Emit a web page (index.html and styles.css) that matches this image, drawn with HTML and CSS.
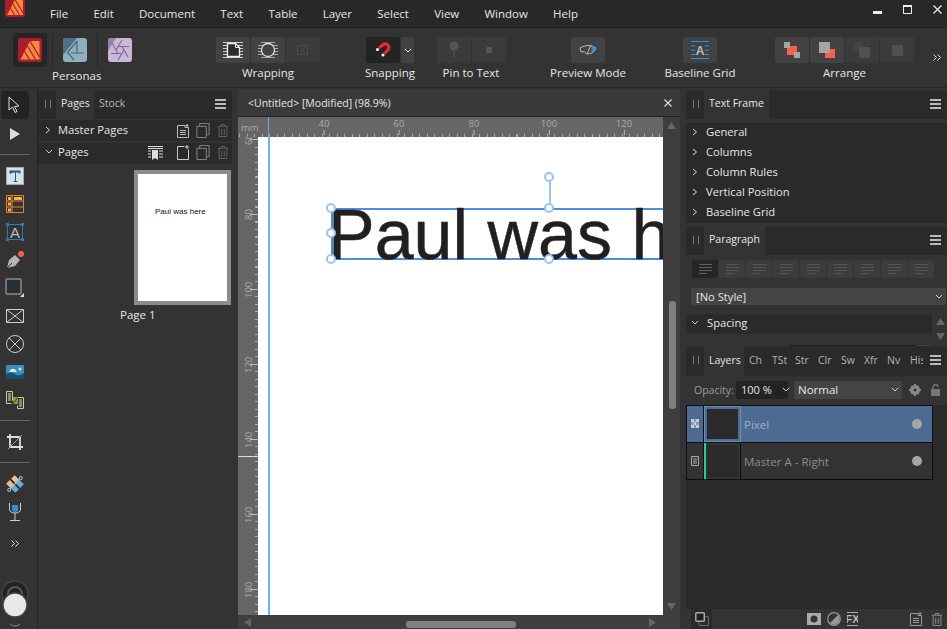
FILE: index.html
```html
<!DOCTYPE html>
<html lang="en">

<head>
    <meta charset="UTF-8">
    <title>Affinity Publisher</title>

    <link rel="stylesheet" href="styles.css">
</head>

<body>
    <svg class="defs" width="0" height="0">
        <symbol id="publisher" viewBox="0 0 24 24">
            <rect width="24" height="24" rx="3" fill="#a81f2c" />
            <path d="M2.500 21.500 12 3h9.500v18.500z" fill="#f8893f" />
            <path d="M12 3 21.500 19M9.500 8 17.500 21.500M6.500 13.500 11.500 21.500" stroke="#a81f2c" stroke-width="1.300" fill="none" />
        </symbol>
        <symbol id="bin" viewBox="0 0 14 16">
            <path d="M1 3h12M5 3V1h4v2M2.500 3v12h9V3M5.500 6v7M8.500 6v7" fill="none" stroke="currentColor" />
        </symbol>
        <symbol id="copy" viewBox="0 0 14 16">
            <path d="M3.500 3.500v-3h10v12h-3M.5 3.500h10v12H.5z" fill="none" stroke="currentColor" />
        </symbol>
        <symbol id="burger" viewBox="0 0 11 10">
            <path d="M0 0h11v2H0zM0 4h11v2H0zM0 8h11v2H0z" fill="currentColor" />
        </symbol>
        <symbol id="align" viewBox="0 0 13 13">
            <path d="M0 1.500h13M0 4.500h13M0 7.500h13M0 10.500h8" stroke="currentColor" fill="none" />
        </symbol>
    </svg>

    <header class="menubar">
        <svg class="logo" width="20" height="20"><use href="#publisher" y="-3" width="20" height="20" /></svg>
        <nav class="menu">
            <span>File</span>
            <span>Edit</span>
            <span>Document</span>
            <span>Text</span>
            <span>Table</span>
            <span>Layer</span>
            <span>Select</span>
            <span>View</span>
            <span>Window</span>
            <span>Help</span>
        </nav>
        <div class="winbtns">
            <svg width="10" height="10"><path d="M0 6h9v3H0z" fill="#eee" /></svg>
            <svg width="10" height="10"><path d="M.5 1.500h8v7h-8z" fill="none" stroke="#eee" /><path d="M0 0h9v2H0z" fill="#eee" /></svg>
            <svg width="10" height="10"><path d="M.5.500l8 8M8.500.500l-8 8" stroke="#eee" stroke-width="1.200" /></svg>
        </div>
    </header>

    <section class="toolbar">
        <div class="group personas">
            <div class="persona-row">
                <span class="persona active"><svg width="24" height="24"><use href="#publisher" /></svg></span>
                <span class="sep first"></span>
                <span class="persona">
                    <svg width="24" height="24">
                        <rect width="24" height="24" rx="3" fill="#8fb0bd" />
                        <path d="M3 0h11L0 17V3q0-3 3-3z" fill="#50708a" />
                        <path d="M14 3 4.500 14.500 11 22M14 3v12M8 15h13" fill="none" stroke="#48667a" stroke-width="1.200" />
                    </svg>
                </span>
                <span class="sep"></span>
                <span class="persona">
                    <svg width="24" height="24">
                        <rect width="24" height="24" rx="3" fill="#cbb7d8" />
                        <path d="M3 0h5L0 13V3q0-3 3-3z" fill="#97839f" />
                        <path d="M14 8.500 20 19M16 12 10 22M14 15.500H3M10 15.500 4 5M8 12 14 2M10 8.500H21" fill="none" stroke="#7f6a8e" stroke-width="1.100" />
                    </svg>
                </span>
            </div>
            <span class="label">Personas</span>
        </div>

        <div class="group wrapping">
            <div class="btns">
                <span class="btn">
                    <svg width="20" height="18" fill="none" stroke="#ccc">
                        <path d="M0 1.500h20M0 4.500h20M0 7.500h20M0 10.500h20M0 13.500h20M0 16.500h20" />
                        <path d="M4.500 2.500h8l4 4v9h-12z" fill="#2c2c2c" stroke="#eee" stroke-width="1.300" />
                        <path d="M12.500 2.500v4h4" stroke="#eee" />
                    </svg>
                </span>
                <span class="btn">
                    <svg width="20" height="18" fill="none" stroke="#ddd">
                        <path d="M3 1.500h14M0 4.500h20M0 7.500h20M0 10.500h20M0 13.500h20M3 16.500h14" stroke="#aaa" />
                        <circle cx="10" cy="9" r="6.500" fill="#424242" stroke-width="1.300" />
                    </svg>
                </span>
                <span class="btn off">
                    <svg width="14" height="12" fill="none" stroke="#4e4e4e">
                        <path d="M1.500 1.500h10v9h-10zM4.500 4l4 4.500M8.500 4l-4 4.500" />
                    </svg>
                </span>
            </div>
            <span class="label">Wrapping</span>
        </div>

        <div class="group snapping">
            <div class="btns">
                <span class="btn dark">
                    <svg width="16" height="16" fill="none">
                        <path d="M4 6 8 2.800A3.400 3.400 0 0 1 12.800 8L9.500 11.500" stroke="#e8263a" stroke-width="3.200" />
                        <circle cx="2.500" cy="7.500" r="1.600" fill="#eee" />
                        <circle cx="8" cy="13" r="1.600" fill="#eee" />
                    </svg>
                </span>
                <span class="btn drop">
                    <svg width="8" height="5" fill="none" stroke="#ddd"><path d="M.8.800 4 4 7.200.800" /></svg>
                </span>
            </div>
            <span class="label">Snapping</span>
        </div>

        <div class="group pin">
            <div class="btns">
                <span class="btn off">
                    <svg width="12" height="20"><circle cx="6" cy="6" r="4.500" fill="#555" /><path d="M5.500 9h1v9h-1z" fill="#555" /></svg>
                </span>
                <span class="btn off">
                    <svg width="6" height="6"><path d="M0 0h6v6H0z" fill="#555" /></svg>
                </span>
            </div>
            <span class="label">Pin to Text</span>
        </div>

        <div class="group preview">
            <div class="btns">
                <span class="btn">
                    <svg width="18" height="12" fill="none" stroke="#bbb">
                        <path d="M1 4q8-5 16 0-2 6-9 6-2-1-3-2.500L2 8z" />
                        <path d="M12 1 8 10" />
                        <path d="M13 2q3 1 4 2-2 4-5 5z" fill="#2a8fdc" stroke="none" />
                    </svg>
                </span>
            </div>
            <span class="label">Preview Mode</span>
        </div>

        <div class="group baseline">
            <div class="btns">
                <span class="btn">
                    <svg width="18" height="18">
                        <path d="M0 .5h18M0 4.800h18M0 9.200h18M0 13.500h18M0 17.500h18" stroke="#2a93df" fill="none" />
                        <rect x="4.500" y="3" width="9" height="12" fill="#424242" />
                        <text x="9" y="13.500" class="glyph">A</text>
                    </svg>
                </span>
            </div>
            <span class="label">Baseline Grid</span>
        </div>

        <div class="group arrange">
            <div class="btns">
                <span class="btn">
                    <svg width="16" height="16">
                        <path d="M0 0h6v6H0zM10 10h6v6h-6z" fill="#a5a5a5" />
                        <path d="M3 6h3V4h7v6h-3v3H3z" fill="#f2604f" />
                    </svg>
                </span>
                <span class="btn">
                    <svg width="16" height="16">
                        <path d="M6 7h10v9H6z" fill="#f2604f" />
                        <path d="M0 0h11v11H0z" fill="#a5a5a5" />
                    </svg>
                </span>
                <span class="btn off">
                    <svg width="16" height="16"><path d="M0 0h9v9H0z" fill="#444" /><path d="M5 5h11v11H5z" fill="#505050" /></svg>
                </span>
                <span class="btn off">
                    <svg width="16" height="16"><path d="M3 3h11v11H3z" fill="#505050" /></svg>
                </span>
            </div>
            <span class="label">Arrange</span>
        </div>

        <svg class="more" width="8" height="7" fill="none" stroke="#ddd"><path d="M.5.500 3.500 3.500.5 6.500M4.500.500 7.500 3.500 4.500 6.500" /></svg>
    </section>

    <main class="workspace">
        <aside class="tools">
            <span class="tool active">
                <svg width="14" height="18"><path d="M1 1v13l3.500-3 2.500 5.500 2-1-2.500-5 4.500-.5z" fill="none" stroke="#ddd" /></svg>
            </span>
            <span class="tool node">
                <svg width="10" height="12"><path d="M0 0l10 6-10 6z" fill="#ddd" /></svg>
            </span>
            <hr>
            <span class="tool">
                <svg width="18" height="18"><rect x=".5" y=".5" width="17" height="17" fill="#d8e3e8" stroke="#aaa" /><path d="M3.500 3.500h11v3h-1.500l-.5-1h-2.500v8.500h1.500v1H7.500v-1H9V5.500H6.500l-.5 1H3.500z" fill="#1f5e7b" /></svg>
            </span>
            <span class="tool">
                <svg width="18" height="18" fill="none"><path d="M.5.500h17v17H.5zM.5 6h17M.5 12h17M6 .5v17" stroke="#e8812f" /><path d="M2 2h3v3H2zM2 7.500h3v3H2zM2 13.500h3v3H2zM8 2h8v3H8z" fill="#f0b83c" /></svg>
            </span>
            <span class="tool">
                <svg width="18" height="18" fill="none"><path d="M1.500 1.500h15v15h-15z" stroke="#2a7bb0" /><path d="M0 0h3v3H0zM15 0h3v3h-3zM0 15h3v3H0zM15 15h3v3h-3z" fill="#2a7bb0" /><text x="9" y="14.500" class="glyph big">A</text></svg>
            </span>
            <span class="tool">
                <svg width="18" height="18"><path d="M1 17 3 9l6-5 5 5-5 6z" fill="#b5b5b5" /><path d="M1 17l5-5" stroke="#333" /><circle cx="15" cy="3" r="3" fill="#f2604f" /></svg>
            </span>
            <span class="tool">
                <svg width="20" height="20"><rect x="1" y="1" width="15" height="15" rx="1" fill="#263036" stroke="#8a8a8a" stroke-width="1.500" /><path d="M19 15v4h-4z" fill="#ddd" /></svg>
            </span>
            <span class="tool">
                <svg width="18" height="14" fill="none" stroke="#ccc"><path d="M.5.500h17v13H.5zM.5.500l17 13M17.500.500l-17 13" /></svg>
            </span>
            <span class="tool">
                <svg width="18" height="18" fill="none" stroke="#ccc"><circle cx="9" cy="9" r="8.500" /><path d="M3 3l12 12M15 3 3 15" /></svg>
            </span>
            <span class="tool">
                <svg width="18" height="14"><rect width="18" height="14" rx="1" fill="#3a8dbd" /><path d="M0 9q5-3 9 0t9-1v5q0 1-1 1H1q-1 0-1-1z" fill="#17506f" /><path d="M3 7q2-4 4-3 2-1 4 3z" fill="#d6e6ee" /><circle cx="14" cy="4" r="1.500" fill="#d6e6ee" /></svg>
            </span>
            <span class="tool">
                <svg width="18" height="18" fill="none"><path d="M6.500 9.500V.5H.5v12h5M12 6.500h5.500v11h-6v-3" stroke="#c9d19a" /><path d="M7 6h5L7 12zM12 7v6H7z" fill="#84a021" /><path d="M2 3h3M2 5h3M2 7h3M2 9h3M13 9h3M13 11h3M13 13h3M13 15h3" stroke="#ddd" /></svg>
            </span>
            <hr>
            <span class="tool">
                <svg width="16" height="16" fill="none" stroke="#ddd" stroke-width="1.800"><path d="M3 0v13h13M0 3h13v13" /><path d="M1 15 15 1" stroke="#999" stroke-width="1" /></svg>
            </span>
            <hr>
            <span class="tool">
                <svg width="20" height="20">
                    <g transform="rotate(-45 10 10)">
                        <path d="M4 3.500h5V10H4zM11 3.500h5V10h-5z" fill="#e9c08e" />
                        <path d="M4 10h5v6.500H4zM11 10h5v6.500h-5z" fill="#5fb1e0" />
                        <path d="M2 10h16" stroke="#bbb" />
                        <circle cx="1.800" cy="10" r="1.500" fill="#333" stroke="#bbb" />
                        <circle cx="18.200" cy="10" r="1.500" fill="#333" stroke="#bbb" />
                    </g>
                </svg>
            </span>
            <span class="tool">
                <svg width="12" height="18" fill="none"><path d="M3 2h6v6q-3 2-6 0z" fill="#3b8cc4" /><path d="M.5 0v6q0 4 5.500 4t5.500-4V0M6 10v7M1 17.500h10" stroke="#ccc" /></svg>
            </span>
            <span class="tool tall">
                <svg width="8" height="7" fill="none" stroke="#ddd"><path d="M.5.500 3.500 3.500.5 6.500M4.500.500 7.500 3.500 4.500 6.500" /></svg>
            </span>
            <div class="swatches">
                <svg width="28" height="49" fill="none">
                    <circle cx="14" cy="14" r="13" fill="#222" stroke="#444" stroke-width="1.500" />
                    <circle cx="14" cy="14" r="7" stroke="#555" stroke-width="2" />
                    <circle cx="14" cy="25" r="12" fill="#e8e8e8" stroke="#444" stroke-width="1.500" />
                    <path d="M9 44q5 4 10 0" stroke="#888" />
                </svg>
            </div>
        </aside>

        <aside class="pages-panel">
            <div class="tabbar">
                <span class="grip"></span>
                <span class="tab on">Pages</span>
                <span class="tab dim">Stock</span>
                <svg class="burger" width="11" height="10"><use href="#burger" /></svg>
            </div>
            <div class="sec master-row">
                <svg class="chev" width="6" height="8" fill="none" stroke="#ddd"><path d="M1 1l3.500 3L1 7" /></svg>
                <span class="sec-title">Master Pages</span>
                <span class="sec-icons">
                    <svg width="12" height="14" fill="none" stroke="#bbb"><path d="M.5 1.500h7.500v2h3.500v10H.5zM3 6.500h6M3 8.500h6M3 10.500h6M10 0v3M8.500 1.500h3" /></svg>
                    <svg class="faint" width="14" height="15"><use href="#copy" /></svg>
                    <svg class="fainter" width="12" height="15"><use href="#bin" /></svg>
                </span>
            </div>
            <div class="sec">
                <svg class="chev" width="8" height="6" fill="none" stroke="#ccc"><path d="M1 1l3 3 3-3" /></svg>
                <span class="sec-title">Pages</span>
                <span class="sec-icons">
                    <svg class="ribbon" width="15" height="14" fill="none" stroke="#ddd"><path d="M0 .5h15M0 2.500h15M0 5h3M11 5h4M0 8h3M11 8h4M0 11h3M11 11h4" /><path d="M4 4h6v10l-3-2-3 2z" fill="#ddd" stroke="none" /></svg>
                    <svg width="12" height="15" fill="none" stroke="#ccc"><path d="M.5 1.500h7M.5 1.500v13h11v-10M10 0v4M8 2h4" /></svg>
                    <svg class="faint" width="14" height="15"><use href="#copy" /></svg>
                    <svg class="fainter" width="12" height="15"><use href="#bin" /></svg>
                </span>
            </div>
            <div class="thumbs">
                <div class="thumb"><p>Paul was here</p></div>
                <span class="thumb-name">Page 1</span>
            </div>
        </aside>

        <section class="doc">
            <div class="doc-tab">
                <span>&lt;Untitled&gt; [Modified] (98.9%)</span>
                <svg width="8" height="8" fill="none" stroke="#ddd" stroke-width="1.200"><path d="M.5.500l7 7M7.500.500l-7 7" /></svg>
            </div>
            <div class="doc-body">
                <div class="viewport">
                    <div class="ruler-top">
                        <span class="mm">mm</span>
                        <i class="tick-x" style="left:86px">40</i>
                        <i class="tick-x" style="left:161px">60</i>
                        <i class="tick-x" style="left:236px">80</i>
                        <i class="tick-x" style="left:311px">100</i>
                        <i class="tick-x" style="left:386px">120</i>
                    </div>
                    <div class="view-row">
                        <div class="ruler-left">
                            <i class="tick-y" style="top:2px">60</i>
                            <i class="tick-y" style="top:77px">80</i>
                            <i class="tick-y" style="top:152px">100</i>
                            <i class="tick-y" style="top:227px">120</i>
                            <i class="tick-y" style="top:302px">140</i>
                            <i class="tick-y" style="top:377px">160</i>
                            <i class="tick-y" style="top:452px">180</i>
                            <b class="cursor-mark"></b>
                        </div>
                        <div class="page">
                            <b class="guide"></b>
                            <div class="frame">Paul was here</div>
                            <b class="rot-line"></b>
                            <b class="handle" style="left:73px;top:71px"></b>
                            <b class="handle" style="left:291px;top:71px"></b>
                            <b class="handle" style="left:73px;top:96px"></b>
                            <b class="handle" style="left:73px;top:122px"></b>
                            <b class="handle" style="left:291px;top:122px"></b>
                            <b class="handle" style="left:291px;top:40px"></b>
                        </div>
                    </div>
                </div>
                <div class="vscroll">
                    <svg width="9" height="7"><path d="M4.500 0 9 7H0z" fill="#666" /></svg>
                    <span class="vthumb"></span>
                    <svg width="9" height="7"><path d="M4.500 7 9 0H0z" fill="#666" /></svg>
                </div>
            </div>
            <div class="hscroll">
                <svg width="7" height="9"><path d="M7 4.500 0 9V0z" fill="#666" transform="rotate(180 3.500 4.500)" /></svg>
                <span class="hthumb"></span>
                <svg width="7" height="9"><path d="M7 4.500 0 9V0z" fill="#666" /></svg>
            </div>
        </section>

        <aside class="right-panel">
            <div class="tabbar">
                <span class="grip"></span>
                <span class="tab on">Text Frame</span>
                <svg class="burger" width="11" height="10"><use href="#burger" /></svg>
            </div>
            <ul class="frame-list">
                <li><svg width="6" height="8" fill="none" stroke="#ddd"><path d="M1 1l3.500 3L1 7" /></svg>General</li>
                <li><svg width="6" height="8" fill="none" stroke="#ddd"><path d="M1 1l3.500 3L1 7" /></svg>Columns</li>
                <li><svg width="6" height="8" fill="none" stroke="#ddd"><path d="M1 1l3.500 3L1 7" /></svg>Column Rules</li>
                <li><svg width="6" height="8" fill="none" stroke="#ddd"><path d="M1 1l3.500 3L1 7" /></svg>Vertical Position</li>
                <li><svg width="6" height="8" fill="none" stroke="#ddd"><path d="M1 1l3.500 3L1 7" /></svg>Baseline Grid</li>
            </ul>
            <div class="tabbar second">
                <span class="grip"></span>
                <span class="tab on">Paragraph</span>
                <svg class="burger" width="11" height="10"><use href="#burger" /></svg>
            </div>
            <div class="para">
                <div class="align-row">
                    <span class="al active"><svg width="13" height="13"><use href="#align" /></svg></span>
                    <span class="al"><svg width="13" height="13"><use href="#align" /></svg></span>
                    <span class="al"><svg width="13" height="13"><use href="#align" /></svg></span>
                    <span class="al"><svg width="13" height="13"><use href="#align" /></svg></span>
                    <span class="al"><svg width="13" height="13"><use href="#align" /></svg></span>
                    <span class="al"><svg width="13" height="13"><use href="#align" /></svg></span>
                    <span class="al"><svg width="13" height="13"><use href="#align" /></svg></span>
                    <span class="al"><svg width="13" height="13"><use href="#align" /></svg></span>
                    <span class="al"><svg width="13" height="13"><use href="#align" /></svg></span>
                </div>
                <div class="style-select">
                    <span>[No Style]</span>
                    <svg width="8" height="5" fill="none" stroke="#ccc"><path d="M.8.800 4 4 7.200.800" /></svg>
                </div>
                <div class="spacing-row">
                    <div class="spacing">
                        <svg width="8" height="6" fill="none" stroke="#ccc"><path d="M1 1l3 3 3-3" /></svg>
                        Spacing
                    </div>
                    <div class="spacing-arrows">
                        <svg width="9" height="7"><path d="M4.500 0 9 7H0z" fill="#666" /></svg>
                        <svg width="9" height="7"><path d="M4.500 7 9 0H0z" fill="#666" /></svg>
                    </div>
                </div>
                <div class="spacing-stub"><span class="stub-dark"></span><span class="stub-thumb"></span></div>
            </div>
            <div class="tabbar third">
                <span class="grip"></span>
                <span class="tab on">Layers</span>
                <span class="tab dim small">Ch</span>
                <span class="tab dim small">TSt</span>
                <span class="tab dim small">Str</span>
                <span class="tab dim small">Clr</span>
                <span class="tab dim small">Sw</span>
                <span class="tab dim small">Xfr</span>
                <span class="tab dim small">Nv</span>
                <span class="tab dim small last">His</span>
                <svg class="burger" width="11" height="10"><use href="#burger" /></svg>
            </div>
            <div class="opacity-row">
                <span class="op-label">Opacity:</span>
                <span class="op-value">100 %<svg width="8" height="5" fill="none" stroke="#ccc"><path d="M.8.800 4 4 7.200.800" /></svg></span>
                <span class="blend">Normal<svg width="8" height="5" fill="none" stroke="#ccc"><path d="M.8.800 4 4 7.200.800" /></svg></span>
                <svg width="12" height="12"><circle cx="6" cy="6" r="3.500" fill="none" stroke="#888" stroke-width="3" /><path d="M5 0h2v12H5zM0 5h12v2H0zM1.500 2.900l1.400-1.400 7.600 7.600-1.400 1.400zM9.100 1.500l1.400 1.400-7.600 7.600-1.400-1.400z" fill="#888" /><circle cx="6" cy="6" r="1.500" fill="#333" /></svg>
                <svg width="9" height="12"><path d="M0 5h9v7H0z" fill="#777" /><path d="M2 5V3a2.500 2.500 0 0 1 5 0" fill="none" stroke="#777" stroke-width="1.300" /></svg>
            </div>
            <div class="layers-area">
                <div class="layers">
                    <div class="layer selected">
                        <span class="lay-icon">
                            <svg width="8" height="10"><path d="M0 0h3v3H0zM5 0h3v3H5zM3 3h2v3H3zM0 6h3v3H0zM5 6h3v3H5z" fill="#c4ccd6" /><path d="M3 0h2v3H3zM0 3h3v3H0zM5 3h3v3H5zM3 6h2v3H3z" fill="#8b9db3" /></svg>
                        </span>
                        <span class="lay-thumb"><i></i></span>
                        <span class="lay-name">Pixel</span>
                        <span class="dot"></span>
                    </div>
                    <div class="layer">
                        <span class="lay-icon">
                            <svg width="8" height="10" fill="none" stroke="#aaa"><path d="M.5.500h7v9h-7zM2 3h4M2 5h4M2 7h4" /></svg>
                        </span>
                        <span class="lay-thumb master"><i></i></span>
                        <span class="lay-name">Master A - Right</span>
                        <span class="dot"></span>
                    </div>
                </div>
            </div>
            <div class="status">
                <span class="status-stack">
                    <svg width="14" height="14" fill="none"><path d="M4 4.500h9.500v9H4z" stroke="#666" /><rect x=".8" y=".8" width="8.500" height="8.500" rx="1" fill="#222" stroke="#aaa" stroke-width="1.500" /></svg>
                </span>
                <span class="status-mid">
                    <svg width="14" height="12"><path d="M0 0h14v12H0z" fill="#aaa" /><circle cx="7" cy="6" r="3.500" fill="#333" /></svg>
                    <svg width="14" height="14"><circle cx="7" cy="7" r="6.300" fill="none" stroke="#999" stroke-width="1.200" /><path d="M3 11 11 3a5.600 5.600 0 0 1-8 8z" fill="#999" /></svg>
                    <svg width="11" height="14" fill="none" stroke="#aaa"><path d="M0 .5h11M0 13.500h11" /><text x="5.500" y="11" class="glyph fx">FX</text></svg>
                </span>
                <span class="status-end">
                    <svg width="12" height="14" fill="none" stroke="#999"><path d="M.5 1.500h7.500v2h3.500v10H.5zM3 6.500h6M3 8.500h6M3 10.500h6M10 0v3M8.500 1.500h3" /></svg>
                    <svg class="binny" width="12" height="15"><use href="#bin" /></svg>
                </span>
            </div>
        </aside>
    </main>
</body>

</html>
```

FILE: styles.css
```css
* {
    box-sizing: border-box;
}

html,
body {
    margin: 0;
    height: 100%;
}

body {
    width: 947px;
    height: 629px;
    overflow: hidden;
    background: #333;
    color: #e6e6e6;
    font-family: "Open Sans", "Noto Sans", sans-serif;
    font-size: 11.5px;
    display: flex;
    flex-direction: column;
}

svg {
    display: block;
    flex: none;
}

.defs {
    position: absolute;
}

.glyph {
    font-family: "Liberation Sans", sans-serif;
    font-size: 12px;
    font-weight: bold;
    fill: #bbb;
    stroke: none;
    text-anchor: middle;
}

.glyph.big {
    font-size: 15px;
    font-weight: normal;
}

.glyph.fx {
    font-size: 11px;
}

/* top menu */
.menubar {
    height: 28px;
    flex: none;
    background: #282828;
    border-bottom: 1px solid #1e1e1e;
    display: flex;
    align-items: center;
    padding-left: 5px;
}

.logo {
    align-self: flex-start;
}

.menu {
    display: flex;
    gap: 25.200px;
    margin-left: 25px;
    padding-bottom: 1px;
}

.winbtns {
    margin-left: auto;
    align-self: flex-start;
    display: flex;
    gap: 20px;
    padding: 5px 4px 0 0;
}

/* toolbar */
.toolbar {
    height: 60px;
    flex: none;
    background: #333;
    border-bottom: 1px solid #262626;
    display: flex;
    position: relative;
}

.group {
    display: flex;
    flex-direction: column;
    align-items: center;
    padding-top: 9px;
}

.label {
    margin-top: 2px;
    white-space: nowrap;
}

.btns {
    display: flex;
    gap: 1px;
}

.btn {
    width: 34px;
    height: 26px;
    background: #424242;
    border-radius: 2px;
    display: flex;
    align-items: center;
    justify-content: center;
}

.btn.off {
    background: #3b3b3b;
}

.btn.dark {
    background: #232323;
}

.btn.drop {
    width: 13px;
}

.personas {
    width: 133px;
    padding-top: 5px;
    padding-left: 13px;
}

.persona-row {
    display: flex;
    align-self: flex-start;
}

.persona {
    height: 34px;
    display: flex;
    align-items: center;
    justify-content: center;
    border-radius: 2px;
}

.persona.active {
    width: 34px;
    background: #262626;
}

.sep {
    width: 1px;
    height: 34px;
    margin: 0 10px;
    background: #262626;
}

.sep.first {
    margin-left: 5px;
}

.personas .label {
    margin-top: 1px;
    align-self: flex-start;
    margin-left: 39px;
}

.wrapping {
    width: 104px;
    margin-left: 83px;
}

.snapping {
    width: 50px;
    margin-left: 45px;
}

.pin {
    width: 70px;
    margin-left: 21px;
}

.preview {
    width: 76px;
    margin-left: 44px;
}

.baseline {
    width: 68px;
    margin-left: 40px;
}

.arrange {
    width: 139px;
    margin-left: 41px;
}

.more {
    position: absolute;
    right: 6px;
    top: 26px;
}

/* main area */
.workspace {
    flex: 1;
    min-height: 0;
    display: flex;
}

.tools {
    width: 38px;
    flex: none;
    border-right: 1px solid #232323;
    display: flex;
    flex-direction: column;
    padding-top: 3px;
}

.tool {
    width: 30px;
    height: 28px;
    flex: none;
    display: flex;
    align-items: center;
    justify-content: center;
}

.tool.node {
    margin-top: 1px;
}

.tool.active {
    width: 28px;
    margin-left: 1px;
    background: #232323;
    border-radius: 4px;
}

.tool.tall {
    height: 34px;
}

.tools hr {
    width: 30px;
    height: 1px;
    flex: none;
    margin: 6px 0 7px 0;
    border: 0;
    background: #666;
}

.swatches {
    margin-top: auto;
    padding-left: 1px;
}

/* panels */
.pages-panel {
    width: 200px;
    flex: none;
    padding-top: 2px;
}

.tabbar {
    height: 29px;
    background: #2a2a2a;
    display: flex;
    align-items: stretch;
    position: relative;
    flex: none;
    font-size: 10.500px;
}

.grip {
    width: 18px;
    flex: none;
    position: relative;
}

.grip::before {
    content: "";
    position: absolute;
    left: 7px;
    top: 10px;
    width: 4px;
    height: 8px;
    border-left: 1px solid #777;
    border-right: 1px solid #777;
}

.tab {
    display: flex;
    align-items: center;
    padding: 0 5px 3px;
}

.tab.on {
    background: #333;
}

.tab.dim {
    color: #b4b4b4;
}

.burger {
    position: absolute;
    right: 6px;
    top: 9px;
    color: #bbb;
}

.pages-panel .tabbar {
    width: 194px;
}

.pages-panel .tab.on {
    width: 38px;
}

.sec {
    width: 194px;
    height: 21px;
    background: #2a2a2a;
    margin-top: 2px;
    display: flex;
    align-items: center;
    font-size: 11.200px;
    padding-bottom: 4px;
}

.master-row {
    margin-top: 1px;
    padding-bottom: 2px;
}

.chev {
    margin-left: 6px;
    width: 8px;
    padding-left: 1px;
}

.sec-title {
    margin-left: 6px;
}

.sec-icons {
    margin-left: auto;
    display: flex;
    align-items: center;
    gap: 7px;
    padding-right: 3px;
    color: #999;
    margin-bottom: -2px;
}

.faint {
    color: #8a8a8a;
}

.fainter {
    color: #6a6a6a;
}

.ribbon {
    margin-right: 7px;
}

.thumbs {
    position: relative;
    height: 170px;
}

.thumb {
    position: absolute;
    left: 96px;
    top: 6px;
    width: 97px;
    height: 135px;
    border: 4px solid #8c8c8c;
    background: #fff;
}

.thumb p {
    margin: 33px 0 0 17px;
    color: #111;
    font-family: "Liberation Sans", sans-serif;
    font-size: 8px;
    white-space: nowrap;
}

.thumb-name {
    position: absolute;
    left: 82px;
    top: 143px;
}

/* document */
.doc {
    width: 442px;
    flex: none;
    padding-top: 2px;
    display: flex;
    flex-direction: column;
    min-height: 0;
}

.doc-tab {
    height: 27px;
    flex: none;
    background: #3a3a3a;
    border-bottom: 1px solid #232323;
    display: flex;
    align-items: center;
    justify-content: space-between;
    padding: 0 8px 0 10px;
    font-size: 10.500px;
}

.doc-body {
    flex: 1;
    min-height: 0;
    display: flex;
}

.viewport {
    width: 425px;
    flex: none;
    display: flex;
    flex-direction: column;
}

.ruler-top {
    height: 20px;
    flex: none;
    background-color: #666;
    background-image: repeating-linear-gradient(90deg, #aaa 0 1px, transparent 1px 7.500px);
    background-size: 100% 3px;
    background-position: 1px bottom;
    background-repeat: no-repeat;
    position: relative;
    color: #aaa;
    font-size: 9.500px;
}

.mm {
    position: absolute;
    left: 3px;
    top: 4px;
}

.tick-x {
    position: absolute;
    top: 0;
    font-style: normal;
    transform: translateX(-50%);
}

.tick-x::after {
    content: "";
    position: absolute;
    left: 50%;
    bottom: -5px;
    width: 1px;
    height: 5px;
    background: #bbb;
}

.ruler-top::after {
    content: "";
    position: absolute;
    left: 30px;
    top: 0;
    width: 1px;
    height: 20px;
    background: #6aa6dc;
}

.view-row {
    flex: 1;
    min-height: 0;
    display: flex;
}

.ruler-left {
    width: 20px;
    flex: none;
    background-color: #666;
    background-image: repeating-linear-gradient(180deg, #aaa 0 1px, transparent 1px 7.500px);
    background-size: 3px 100%;
    background-position: right 2px;
    background-repeat: no-repeat;
    position: relative;
    color: #aaa;
    font-size: 9.500px;
    overflow: hidden;
}

.tick-y {
    position: absolute;
    right: 0;
    width: 20px;
    height: 1px;
    font-style: normal;
    line-height: 1px;
    writing-mode: vertical-rl;
    transform: rotate(180deg);
    transform-origin: center;
    display: flex;
    align-items: center;
    justify-content: center;
    overflow: visible;
}

.tick-y::before {
    content: "";
    position: absolute;
    left: 0;
    top: 0;
    width: 8px;
    height: 1px;
    background: #bbb;
}

.cursor-mark {
    position: absolute;
    left: 0;
    top: 319px;
    width: 20px;
    height: 1px;
    background: #ddd;
}

.page {
    flex: 1;
    background: #fff;
    position: relative;
    overflow: hidden;
}

.guide {
    position: absolute;
    left: 10px;
    top: 0;
    bottom: 0;
    width: 1.500px;
    background: #6db3f2;
}

.frame {
    position: absolute;
    left: 73px;
    top: 71px;
    width: 500px;
    height: 52px;
    border: 2px solid #4a8fdc;
    color: #221f20;
    font-family: "Liberation Sans", sans-serif;
    font-size: 70px;
    line-height: 50px;
    white-space: nowrap;
    text-indent: -5px;
    -webkit-text-stroke: 0.5px #221f20;
}

.rot-line {
    position: absolute;
    left: 291px;
    top: 42px;
    width: 1.500px;
    height: 30px;
    background: #9cc4f0;
}

.handle {
    position: absolute;
    width: 10px;
    height: 10px;
    margin: -5px 0 0 -5px;
    border-radius: 50%;
    background: #fff;
    border: 2px solid #9cc4f0;
}

.vscroll {
    width: 17px;
    background: #3e3e3e;
    display: flex;
    flex-direction: column;
    align-items: center;
    padding: 5px 0;
    position: relative;
    justify-content: space-between;
}

.vthumb {
    position: absolute;
    left: 6px;
    top: 184px;
    width: 7px;
    height: 108px;
    background: #808080;
    border-radius: 3px;
}

.hscroll {
    height: 14px;
    flex: none;
    width: 442px;
    background: #3e3e3e;
    display: flex;
    align-items: center;
    justify-content: space-between;
    padding: 0 24px 0 6px;
    position: relative;
}

.hthumb {
    position: absolute;
    left: 168px;
    top: 6px;
    width: 110px;
    height: 7px;
    background: #808080;
    border-radius: 3px;
}

/* right side */
.right-panel {
    width: 261px;
    flex: none;
    margin-left: 6px;
    padding-top: 2px;
    display: flex;
    flex-direction: column;
    min-height: 0;
}

.frame-list {
    list-style: none;
    margin: 4px 0 0;
    padding: 0;
    height: 100px;
    background: #2a2a2a;
    flex: none;
    font-size: 11.200px;
}

.frame-list li {
    height: 20px;
    display: flex;
    align-items: center;
    gap: 8px;
    padding: 0 0 3px 6px;
}

.second {
    margin-top: 3px;
}

.para {
    height: 91px;
    flex: none;
    padding-top: 5px;
}

.align-row {
    display: flex;
    gap: 1px;
    padding-left: 6px;
}

.al {
    width: 26px;
    height: 18px;
    background: #3c3c3c;
    border-radius: 2px;
    display: flex;
    align-items: center;
    justify-content: center;
    color: #565656;
}

.al.active {
    background: #252525;
    color: #5e5e5e;
}

.style-select {
    margin: 10px 1px 0 5px;
    height: 17px;
    background: #444;
    border-radius: 2px;
    display: flex;
    align-items: center;
    justify-content: space-between;
    padding: 0 3px 0 5px;
    font-size: 11.200px;
}

.spacing-row {
    display: flex;
    margin-top: 9px;
}

.spacing {
    width: 246px;
    height: 20px;
    background: #2a2a2a;
    display: flex;
    align-items: center;
    gap: 8px;
    padding: 0 0 3px 5px;
    font-size: 11.200px;
}

.spacing-arrows {
    flex: 1;
    display: flex;
    flex-direction: column;
    align-items: flex-end;
    justify-content: space-between;
    padding: 4px 2px 0 0;
    height: 26px;
}

.spacing-stub {
    display: flex;
    height: 6px;
    margin: 5px 0 0 104px;
    gap: 1px;
}

.stub-dark {
    width: 126px;
    background: #1f1f1f;
}

.stub-thumb {
    width: 13px;
    background: #444;
}

.third {
    height: 30px;
}

.third .tab.on {
    width: 40px;
}

.tab.small {
    padding: 0 0 3px 5px;
    width: 23px;
    overflow: hidden;
    white-space: nowrap;
}

.tab.small.last {
    width: 18px;
}

.opacity-row {
    height: 29px;
    flex: none;
    display: flex;
    align-items: center;
    padding: 0 5px 2px 8px;
    white-space: nowrap;
}

.op-label {
    color: #9a9a9a;
    width: 42px;
    font-size: 10.500px;
}

.op-value {
    width: 52px;
    height: 18px;
    background: #232323;
    border-radius: 2px;
    display: flex;
    align-items: center;
    justify-content: space-between;
    padding: 0 3px 0 5px;
    font-size: 11px;
}

.blend {
    width: 108px;
    height: 18px;
    margin: 0 7px 0 6px;
    background: #444;
    border-radius: 2px;
    display: flex;
    align-items: center;
    justify-content: space-between;
    padding: 0 3px 0 4px;
}

.opacity-row svg:last-child {
    margin-left: 10px;
}

.layers-area {
    flex: 1;
    min-height: 0;
    background: #2a2a2a;
    padding-right: 14px;
    border-bottom: 1px solid #2a2a2a;
}

.layers {
    border: 1px solid #0e0e0e;
    border-bottom: 0;
}

.layer {
    height: 37px;
    background: #333;
    display: flex;
    align-items: stretch;
    border-bottom: 1px solid #0e0e0e;
    color: #8d8d8d;
}

.layer.selected {
    background: #4d6b90;
    color: #9fb0c5;
}

.lay-icon {
    width: 17px;
    flex: none;
    display: flex;
    align-items: center;
    justify-content: center;
    border-right: 1px solid #0e0e0e;
}

.lay-thumb {
    width: 37px;
    flex: none;
    padding: 2px;
    border-right: 1px solid #0e0e0e;
}

.lay-thumb i {
    display: block;
    height: 100%;
    background: #2a2a2a;
}

.layer.selected .lay-thumb {
    border: 1px solid #6f8fb5;
}

.lay-thumb.master {
    border-left: 2px solid #2bc8a5;
    padding-left: 1px;
}

.lay-name {
    flex: 1;
    padding-left: 3px;
    display: flex;
    align-items: center;
}

.dot {
    width: 10px;
    height: 10px;
    border-radius: 50%;
    background: #a5a5a5;
    align-self: center;
    margin-right: 10px;
}

.status {
    height: 20px;
    flex: none;
    display: flex;
    align-items: center;
    color: #999;
}

.status-stack {
    width: 21px;
    height: 20px;
    margin-left: 5px;
    background: #2a2a2a;
    display: flex;
    align-items: center;
    justify-content: center;
}

.status-mid {
    display: flex;
    align-items: center;
    gap: 6px;
    margin-left: 95px;
}

.status-end {
    display: flex;
    align-items: center;
    gap: 9px;
    margin-left: auto;
    padding-right: 4px;
}
```
